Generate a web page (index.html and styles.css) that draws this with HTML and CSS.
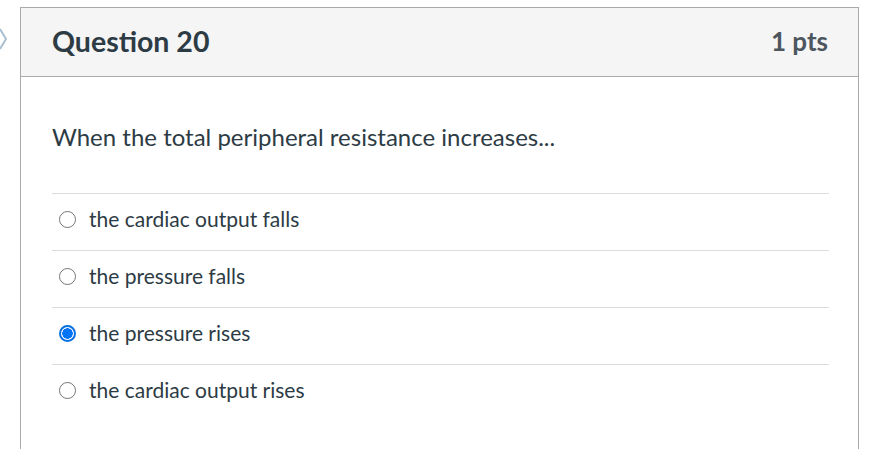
FILE: index.html
```html
<!DOCTYPE html>
<html>
<head>
<meta charset="utf-8">
<link rel="stylesheet" href="styles.css">
</head>
<body>
<div class="page">
  <div class="gutter">
    <svg class="chev" width="10" height="24" viewBox="0 0 10 24"><path d="M1 2 L7 12 L1 22" fill="none" stroke="#a9c0d3" stroke-width="2"/></svg>
  </div>
  <div class="card">
    <div class="card-header">
      <h2 class="title">Question 20</h2>
      <span class="pts">1 pts</span>
    </div>
    <div class="card-body">
      <p class="question">When the total peripheral resistance increases...</p>
      <ul class="answers">
        <li class="answer"><span class="radio"></span><span class="label">the cardiac output falls</span></li>
        <li class="answer"><span class="radio"></span><span class="label">the pressure falls</span></li>
        <li class="answer"><span class="radio checked"></span><span class="label">the pressure rises</span></li>
        <li class="answer"><span class="radio"></span><span class="label">the cardiac output rises</span></li>
      </ul>
    </div>
  </div>
</div>
</body>
</html>
```

FILE: styles.css
```css
html, body {
  margin: 0;
  padding: 0;
  background: #fff;
  font-family: Lato, "Liberation Sans", sans-serif;
  color: #2d3b45;
  overflow: hidden;
}
.page {
  display: flex;
  height: 449px;
}
.gutter {
  width: 20px;
  flex: none;
  padding-top: 27px;
  box-sizing: border-box;
}
.chev {
  display: block;
  margin-left: -1px;
}
.card {
  margin-top: 7px;
  width: 839px;
  box-sizing: border-box;
  border: 1px solid #aaaaaa;
  border-bottom: none;
}
.card-header {
  height: 69px;
  background: #f5f5f5;
  border-bottom: 1px solid #aaaaaa;
  display: flex;
  align-items: center;
  justify-content: space-between;
  padding: 0 30px 3px 31px;
  box-sizing: border-box;
}
.title {
  margin: 0;
  font-size: 28.5px;
  line-height: 34px;
  font-weight: 700;
  color: #2d3b45;
}
.pts {
  font-size: 26px;
  line-height: 34px;
  font-weight: 700;
  color: #4c565e;
}
.card-body {
  padding: 0 29px 0 31px;
}
.question {
  margin: 0;
  padding-top: 46px;
  height: 70px;
  box-sizing: content-box;
  font-size: 24px;
  line-height: 28px;
}
.answers {
  list-style: none;
  margin: 0;
  padding: 0;
}
.answer {
  display: flex;
  align-items: center;
  padding-bottom: 6px;
  box-sizing: content-box;
  height: 50px;
  border-top: 1px solid #dcdcdc;
}
.radio {
  width: 15px;
  height: 15px;
  border: 1.5px solid #757575;
  border-radius: 50%;
  margin-left: 7px;
  margin-right: 13px;
  flex: none;
  box-sizing: content-box;
}
.radio.checked {
  border: 2.5px solid #0770e3;
  width: 13px;
  height: 13px;
  background: radial-gradient(circle, #0374f5 0 5px, #fff 5.5px);
}
.label {
  font-size: 21px;
  line-height: 26px;
  color: #2d3b45;
}
```
